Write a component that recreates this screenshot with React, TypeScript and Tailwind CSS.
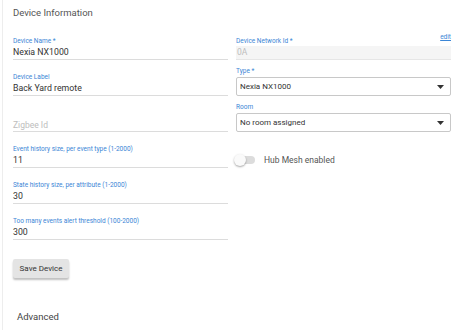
import React from "react";

const Field = ({ label, value, placeholder }: { label?: string; value?: string; placeholder?: string }) => (
  <div className="mb-[13px]">
    <div className="h-[9px] text-[6.5px] leading-[9px] text-[#3b86d6]">{label}</div>
    <div className="h-[14px] border-b border-[#dcdcdc] text-[8.75px] leading-[13px] text-[#333]">
      {value ? value : <span className="text-[#bdbdbd]">{placeholder}</span>}
    </div>
  </div>
);

const Select = ({ label, value }: { label: string; value: string }) => (
  <div>
    <div className="h-[9px] text-[6.5px] leading-[9px] text-[#3b86d6]">{label}</div>
    <div className="mt-px flex h-[19px] items-center justify-between rounded-[2px] border border-[#c8c8c8] pl-[3px] pr-[6px] text-[8px] text-[#333]">
      <span>{value}</span>
      <svg width="7" height="4" viewBox="0 0 7 4">
        <path d="M0 0h7L3.5 4z" fill="#333" />
      </svg>
    </div>
  </div>
);

const App = () => {
  return (
    <main
      className="h-[330px] w-[474px] overflow-hidden bg-white"
      style={{ fontFamily: "Roboto, 'Liberation Sans', sans-serif" }}
    >
      <div className="ml-[2px] h-full border-l border-[#ededed] pl-[10px]">
        <h2 className="pt-[6px] text-[9.5px] leading-[14px] text-[#555]">Device Information</h2>
        <div className="mt-[17px] grid grid-cols-[215px_215px] gap-x-[8px]">
          <div>
            <Field label="Device Name *" value="Nexia NX1000" />
            <Field label="Device Label" value="Back Yard remote" />
            <div className="mb-[13px]">
              <div className="h-[23px] border-b border-[#dcdcdc] pt-[10px] text-[8.5px] leading-[13px] text-[#bdbdbd]">
                Zigbee Id
              </div>
            </div>
            <Field label="Event history size, per event type (1-2000)" value="11" />
            <Field label="State history size, per attribute (1-2000)" value="30" />
            <Field label="Too many events alert threshold (100-2000)" value="300" />
            <button className="mt-[6px] h-[19px] w-[56px] rounded-[2px] bg-[#e4e4e4] text-[8px] text-[#333] shadow-[0_2px_2px_rgba(0,0,0,0.25)]">
              Save Device
            </button>
          </div>
          <div>
            <div className="relative">
              <div className="h-[9px] text-[6.5px] leading-[9px] text-[#3b86d6]">Device Network Id *</div>
              <a className="absolute right-0 top-[-4px] text-[6.5px] text-[#3b86d6] underline">edit</a>
              <div className="h-[14px] border-b border-[#e6e6e6] bg-[#f5f5f5] pl-[1px] text-[8.5px] leading-[13px] text-[#bdbdbd]">
                0A
              </div>
            </div>
            <div className="mt-[7px]">
              <Select label="Type *" value="Nexia NX1000" />
            </div>
            <div className="mt-[7px]">
              <Select label="Room" value="No room assigned" />
            </div>
            <div className="mt-[22px] flex items-center">
              <div className="relative ml-[-2px] h-[12px] w-[21px]">
                <div className="absolute left-[3px] top-[2px] h-[8px] w-[18px] rounded-full bg-[#dcdcdc]" />
                <div className="absolute left-0 top-0 h-[12px] w-[12px] rounded-full bg-[#fafafa] shadow-[0_1px_2px_rgba(0,0,0,0.35)]" />
              </div>
              <span className="ml-[9px] text-[8.5px] text-[#555]">Hub Mesh enabled</span>
            </div>
          </div>
        </div>
        <h3 className="mt-[32px] pl-[4px] text-[9.5px] text-[#444]">Advanced</h3>
      </div>
    </main>
  );
};

export default App;
